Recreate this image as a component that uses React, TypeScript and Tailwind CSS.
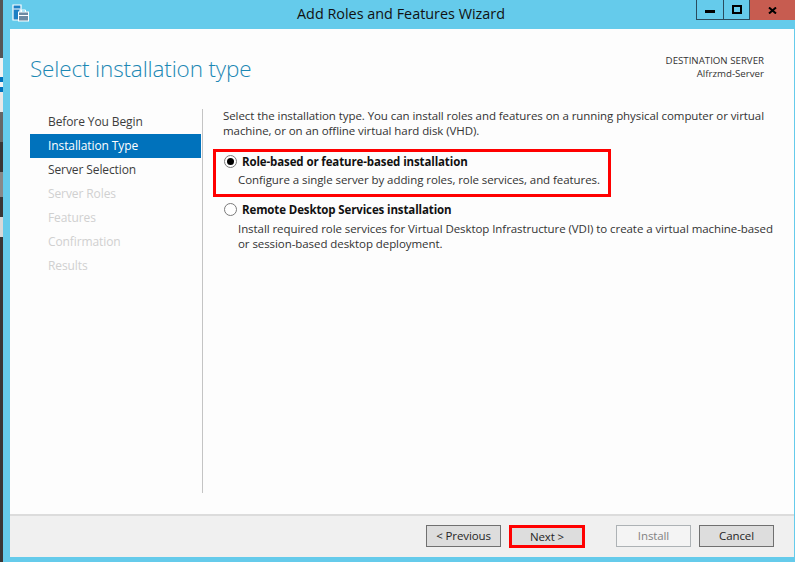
import React from 'react';

const font = "font-['Open_Sans','Noto_Sans',sans-serif]";

const steps = [
    { label: 'Before You Begin', cls: 'text-[#3c3c3c]' },
    { label: 'Installation Type', cls: 'bg-[#0072bc] text-white' },
    { label: 'Server Selection', cls: 'text-[#3c3c3c]' },
    { label: 'Server Roles', cls: 'text-[#d0d0d0]' },
    { label: 'Features', cls: 'text-[#d0d0d0]' },
    { label: 'Confirmation', cls: 'text-[#d0d0d0]' },
    { label: 'Results', cls: 'text-[#d0d0d0]' },
];

const AppIcon = () => (
    <svg width="17" height="18" viewBox="0 0 17 18" fill="none">
        <path d="M1 1h8v5h-1v6H7v4H1z" fill="#1c7fc4" stroke="#fff" strokeWidth="1.2" />
        <rect x="1.5" y="4.5" width="7" height="1" fill="#fff" />
        <rect x="6.5" y="8" width="10" height="9" fill="#6d8ba3" stroke="#fff" strokeWidth="1" />
        <path d="M9.5 8V6h4v2" stroke="#fff" strokeWidth="1" />
        <path d="M7 11.5h9" stroke="#fff" strokeWidth="1" />
    </svg>
);

const CloseIcon = () => (
    <svg width="9" height="7" viewBox="0 0 9 7" fill="none">
        <path d="M1 0.5 8 6.5M8 0.5 1 6.5" stroke="#000" strokeWidth="2" />
    </svg>
);

const Radio: React.FC<{ checked?: boolean }> = ({ checked }) => (
    <span className="flex h-[13px] w-[13px] shrink-0 items-center justify-center rounded-full border border-[#7a7a7a] bg-white">
        {checked && <span className="h-[7px] w-[7px] rounded-full bg-black" />}
    </span>
);

const WizardButton: React.FC<{ label: string; disabled?: boolean; className?: string }> = ({ label, disabled, className }) => (
    <button
        className={`h-[22px] w-[75px] border text-[11.5px] leading-[18px] tracking-[-0.1px] ${className ?? ''} ${
            disabled ? 'border-[#adb2b5] bg-[#f4f4f4] text-[#838383]' : 'border-[#707070] bg-[#dddddd] text-[#262626]'
        }`}
    >
        {label}
    </button>
);

export default function App() {
    return (
        <div className={`flex h-[562px] w-[795px] overflow-hidden ${font}`}>
            {/* bit of the desktop behind the window */}
            <div className="flex w-[3px] shrink-0 flex-col bg-[#3a3636]">
                <div className="h-[58px] bg-[#555555]" />
                <div className="h-[19px] bg-[#f2f2f2]" />
                <div className="h-[5px] bg-[#0072bc]" />
                <div className="h-[5px] bg-[#f2f2f2]" />
                <div className="h-[5px] bg-[#0072bc]" />
                <div className="h-[20px] bg-[#e8e8e8]" />
                <div className="h-[30px] bg-[#666666]" />
                <div className="h-[30px] bg-[#3a3636]" />
                <div className="h-[25px] bg-[#888888]" />
                <div className="h-[20px] bg-[#3a3636]" />
                <div className="h-[20px] bg-[#d8d8d8]" />
            </div>

            <div className="flex min-w-0 flex-1 flex-col bg-[#65cbeb] pb-[5px] pl-[7px] pr-px">
                <div className="-ml-[7px] -mr-px grid h-[29px] shrink-0 grid-cols-[1fr_auto_1fr]">
                    <div className="pl-[9px] pt-1">
                        <AppIcon />
                    </div>
                    <div className="pl-1 pt-[3px] text-[14.4px] leading-[22px] text-[#111111]">Add Roles and Features Wizard</div>
                    <div className="flex justify-end">
                        <div className="flex h-5 border-x border-b border-[#2a4c5e]">
                            <div className="flex w-[27px] items-center justify-center border-r border-[#2a4c5e]">
                                <span className="mt-1 h-[3px] w-[10px] bg-black" />
                            </div>
                            <div className="flex w-[25px] items-center justify-center">
                                <span className="h-[9px] w-[10px] border-2 border-black" />
                            </div>
                        </div>
                        <div className="flex h-5 w-[45px] items-center justify-center bg-[#c75c50]">
                            <CloseIcon />
                        </div>
                    </div>
                </div>

                <div className="flex min-h-0 flex-1 flex-col bg-[#fdfdfd]">
                    <div className="flex h-[80px] shrink-0 justify-between pl-5 pr-[30px]">
                        <h1 className="pt-[22px] text-[22.5px] font-light leading-[36px] tracking-[-0.15px] text-[#1c88b4]">Select installation type</h1>
                        <div className="pt-[25px] text-right text-[9.7px] leading-[13px] text-[#333333]">
                            <div>DESTINATION SERVER</div>
                            <div>Alfrzmd-Server</div>
                        </div>
                    </div>

                    <div className="flex min-h-0 flex-1 pl-5">
                        <div className="mb-[21px] flex w-[173px] shrink-0 flex-col border-r border-[#c4c4c4] pt-px">
                            {steps.map(step => (
                                <div key={step.label} className={`mr-px h-6 pl-[18px] text-[12px] leading-6 tracking-[-0.1px] ${step.cls}`}>
                                    {step.label}
                                </div>
                            ))}
                        </div>

                        <div className="min-w-0 flex-1 pl-5 text-[11.5px] leading-[15px] tracking-[-0.07px] text-[#333333]">
                            <p className="-mt-px w-[555px]">
                                Select the installation type. You can install roles and features on a running physical computer or virtual machine, or on an offline virtual hard disk (VHD).
                            </p>
                            <div className="-ml-[10px] mt-[11px] h-[48px] w-[398px] border-[3px] border-[#ff0000] pl-[8px]">
                                <div className="flex h-[18px] items-center gap-[5px] font-bold tracking-[-0.12px] text-[#111111]">
                                    <Radio checked />
                                    <span>Role-based or feature-based installation</span>
                                </div>
                                <p className="mt-[2px] pl-[14px]">Configure a single server by adding roles, role services, and features.</p>
                            </div>
                            <div className="mt-[3px] flex h-[18px] items-center gap-[5px] pl-px font-bold tracking-[-0.12px] text-[#111111]">
                                <Radio />
                                <span>Remote Desktop Services installation</span>
                            </div>
                            <p className="mt-[3px] w-[555px] pl-[15px]">
                                Install required role services for Virtual Desktop Infrastructure (VDI) to create a virtual machine-based or session-based desktop deployment.
                            </p>
                        </div>
                    </div>

                    <div className="flex h-[43px] shrink-0 items-start border-t-2 border-[#dcdcdc] bg-[#f0f0f0] pl-[416px] pt-[9px]">
                        <WizardButton label="< Previous" />
                        <button className="ml-2 h-[23px] w-[76px] border-[3px] border-[#ff0000] bg-[#dddddd] text-[11.5px] leading-[17px] tracking-[-0.1px] text-[#262626]">
                            {'Next >'}
                        </button>
                        <WizardButton label="Install" disabled className="ml-[31px]" />
                        <WizardButton label="Cancel" className="ml-2" />
                    </div>
                </div>
            </div>
        </div>
    );
}
